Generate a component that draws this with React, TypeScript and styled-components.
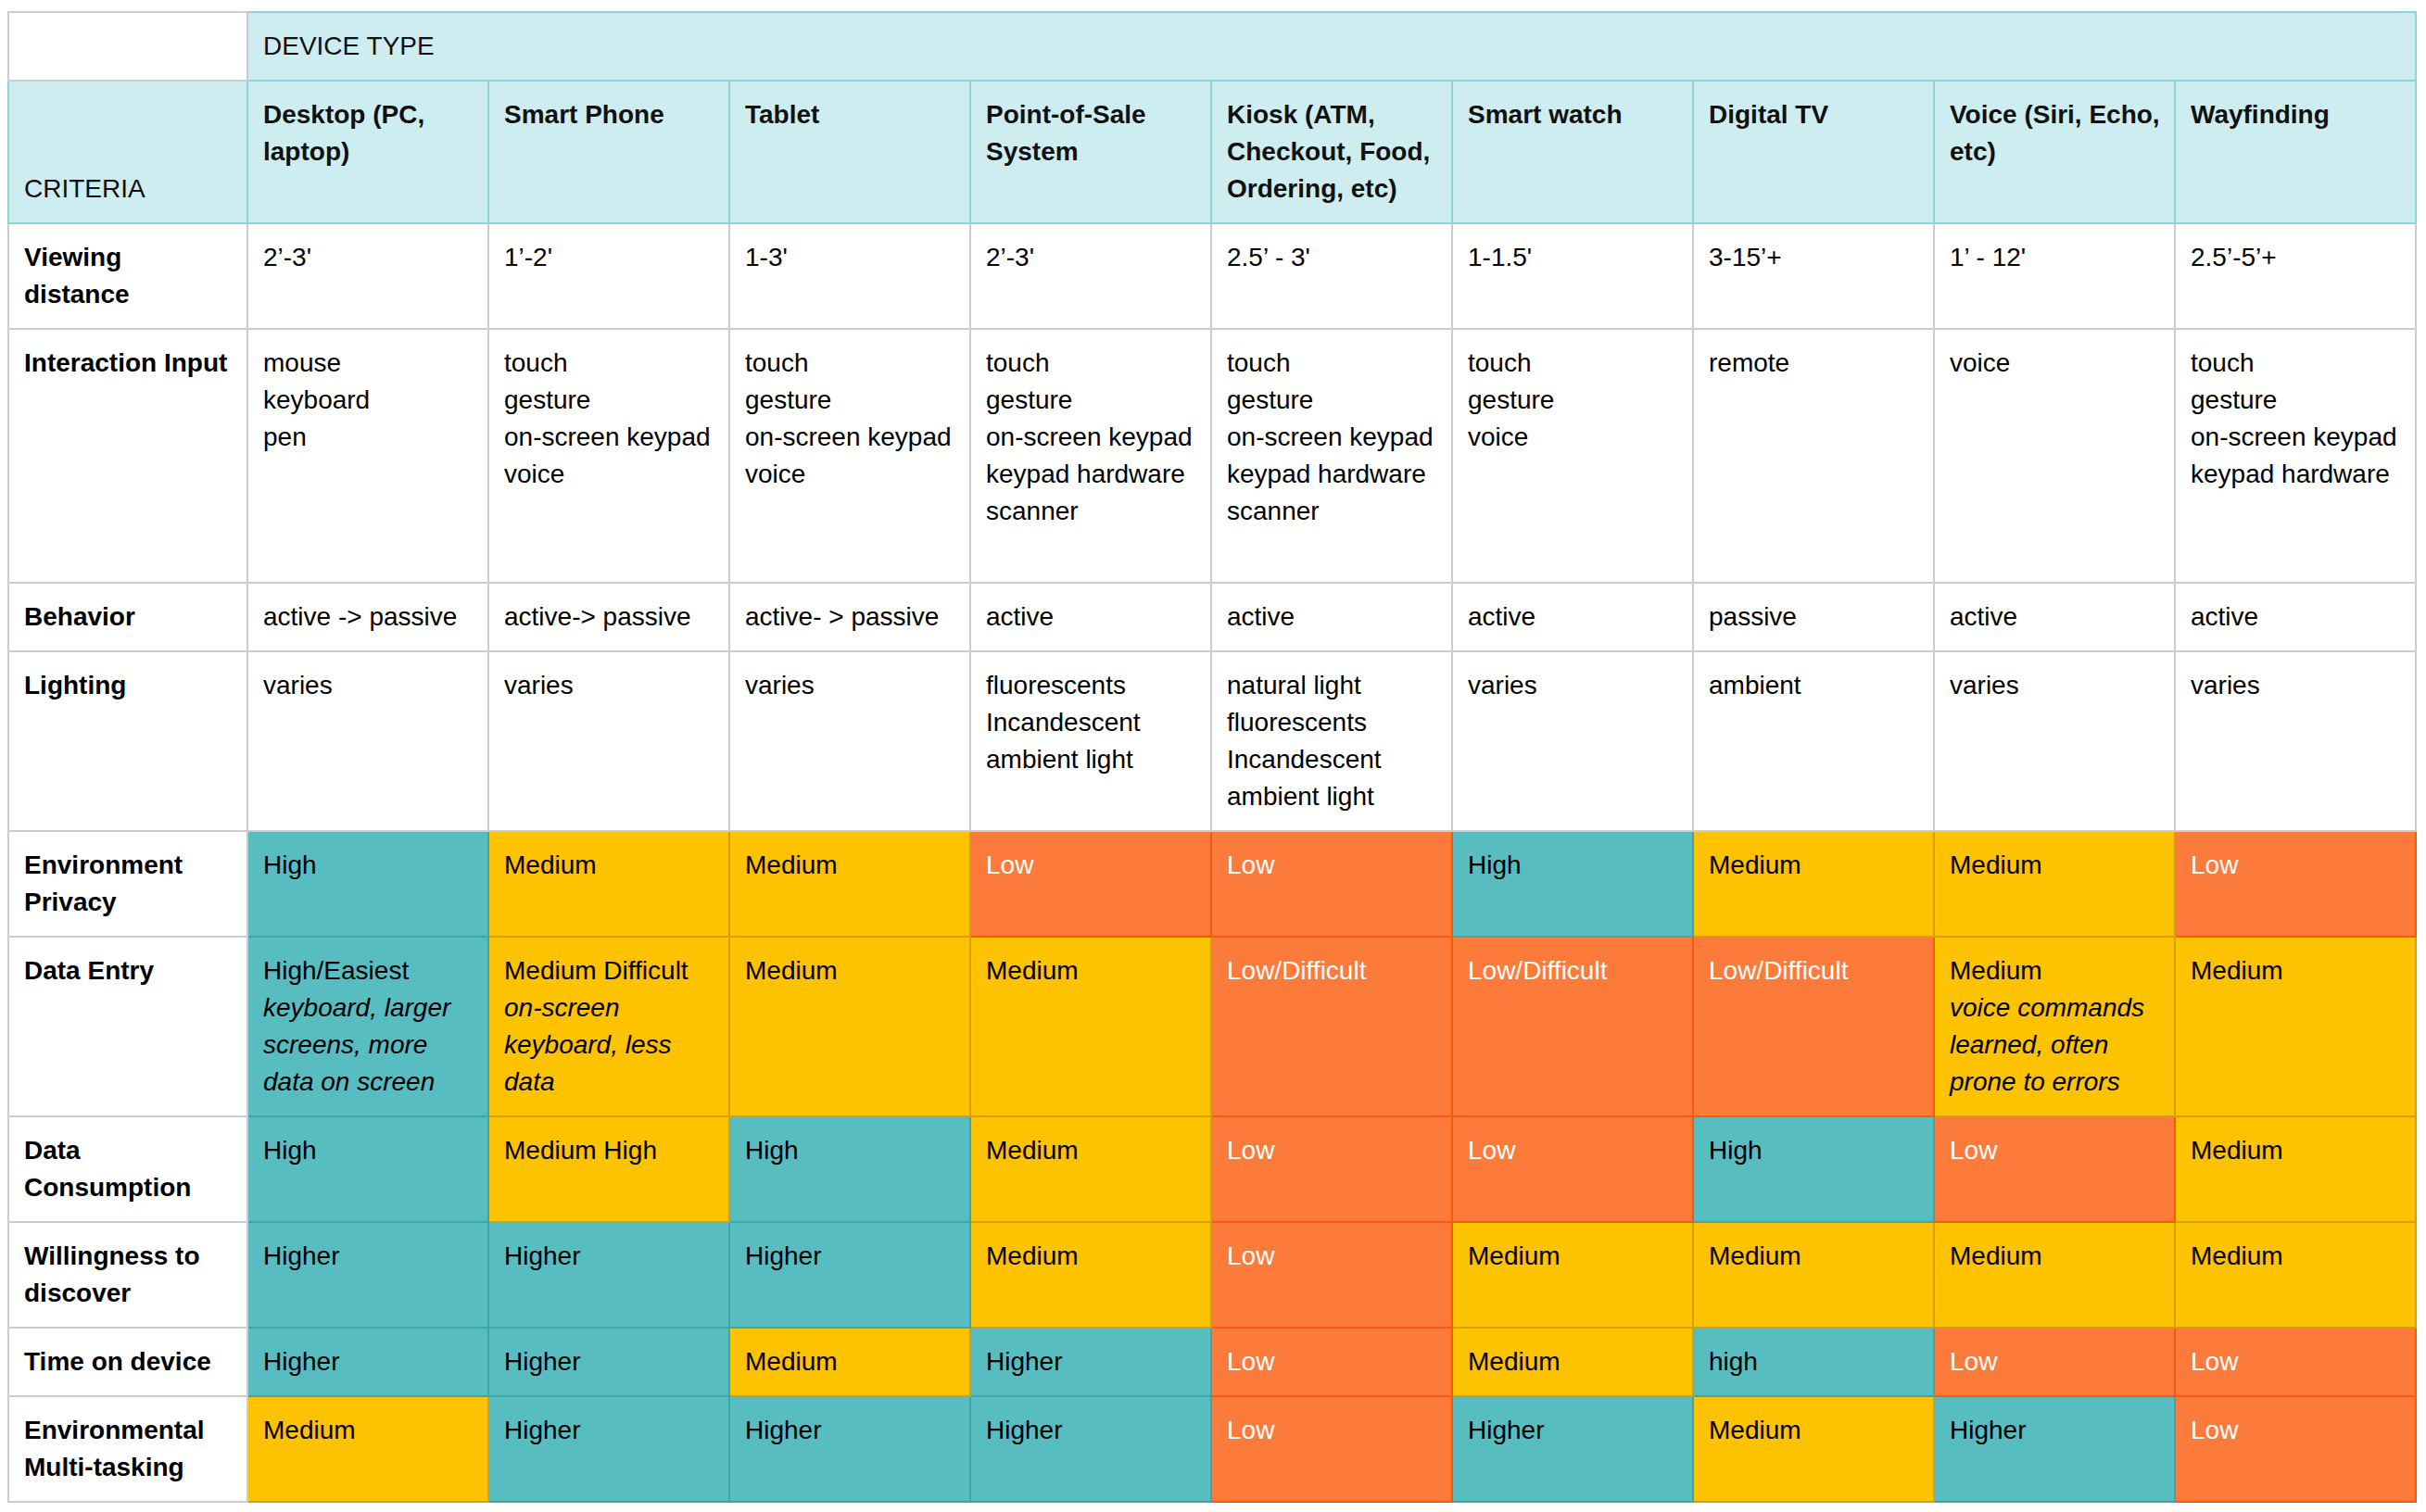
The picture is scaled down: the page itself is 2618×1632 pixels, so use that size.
import React from "react";
import styled, { createGlobalStyle, css } from "styled-components";

const GlobalStyle = createGlobalStyle`
  html, body { margin: 0; padding: 0; background: #ffffff; }
  body { font-family: "Liberation Sans", Arial, Helvetica, sans-serif; color: #000; }
`;

type Tone = "plain" | "head" | "corner" | "teal" | "yellow" | "orange";

const tones: Record<Tone, { bg: string; border: string; color: string }> = {
  plain: { bg: "#ffffff", border: "#cccccc", color: "#000000" },
  corner: { bg: "#ffffff", border: "#cccccc", color: "#000000" },
  head: { bg: "#cdedf0", border: "#8dd4da", color: "#111111" },
  teal: { bg: "#57bdc1", border: "#3ea6aa", color: "#000000" },
  yellow: { bg: "#fdc200", border: "#d3a100", color: "#000000" },
  orange: { bg: "#fd7b3a", border: "#f75a0e", color: "#ffffff" },
};

const Page = styled.div`
  padding: 12px 8px 10px 8px;
`;

const Grid = styled.table`
  border-collapse: collapse;
  table-layout: fixed;
  width: 2600px;
  font-size: 28px;
  line-height: 40px;
`;

const Col = styled.col<{ $w: number }>`
  width: ${(p) => p.$w}px;
`;

const Cell = styled.td<{ $tone: Tone; $bold?: boolean; $bottom?: boolean }>`
  ${(p) => css`
    background: ${tones[p.$tone].bg};
    color: ${tones[p.$tone].color};
    border: 2px solid ${tones[p.$tone].border};
  `}
  padding: 16px 14px 16px 16px;
  vertical-align: ${(p) => (p.$bottom ? "bottom" : "top")};
  text-align: left;
  font-weight: ${(p) => (p.$bold ? 700 : 400)};
`;

const Line = styled.div<{ $italic?: boolean }>`
  white-space: nowrap;
  font-style: ${(p) => (p.$italic ? "italic" : "normal")};
  min-height: 40px;
`;

type Entry = { lines: string[]; tone?: Tone; italicFrom?: number };
type Row = { label: string[]; cells: Entry[] };

const T = (s: string): Entry => ({ lines: [s], tone: "teal" });
const Y = (s: string): Entry => ({ lines: [s], tone: "yellow" });
const O = (s: string): Entry => ({ lines: [s], tone: "orange" });
const P = (...l: string[]): Entry => ({ lines: l, tone: "plain" });

const devices: string[][] = [
  ["Desktop (PC,", "laptop)"],
  ["Smart Phone"],
  ["Tablet"],
  ["Point-of-Sale", "System"],
  ["Kiosk (ATM,", "Checkout, Food,", "Ordering, etc)"],
  ["Smart watch"],
  ["Digital TV"],
  ["Voice (Siri, Echo,", "etc)"],
  ["Wayfinding"],
];

const rows: Row[] = [
  {
    label: ["Viewing", "distance"],
    cells: ["2’-3'", "1’-2'", "1-3'", "2’-3'", "2.5’ - 3'", "1-1.5'", "3-15’+", "1’ - 12'", "2.5’-5’+"].map((s) => P(s)),
  },
  {
    label: ["Interaction Input"],
    cells: [
      P("mouse", "keyboard", "pen"),
      P("touch", "gesture", "on-screen keypad", "voice"),
      P("touch", "gesture", "on-screen keypad", "voice"),
      P("touch", "gesture", "on-screen keypad", "keypad hardware", "scanner", ""),
      P("touch", "gesture", "on-screen keypad", "keypad hardware", "scanner"),
      P("touch", "gesture", "voice"),
      P("remote"),
      P("voice"),
      P("touch", "gesture", "on-screen keypad", "keypad hardware"),
    ],
  },
  {
    label: ["Behavior"],
    cells: ["active -> passive", "active-> passive", "active- > passive", "active", "active", "active", "passive", "active", "active"].map((s) => P(s)),
  },
  {
    label: ["Lighting"],
    cells: [
      P("varies"),
      P("varies"),
      P("varies"),
      P("fluorescents", "Incandescent", "ambient light"),
      P("natural light", "fluorescents", "Incandescent", "ambient light"),
      P("varies"),
      P("ambient"),
      P("varies"),
      P("varies"),
    ],
  },
  {
    label: ["Environment", "Privacy"],
    cells: [T("High"), Y("Medium"), Y("Medium"), O("Low"), O("Low"), T("High"), Y("Medium"), Y("Medium"), O("Low")],
  },
  {
    label: ["Data Entry"],
    cells: [
      { lines: ["High/Easiest", "keyboard, larger", "screens, more", "data on screen"], tone: "teal", italicFrom: 1 },
      { lines: ["Medium Difficult", "on-screen", "keyboard, less", "data"], tone: "yellow", italicFrom: 1 },
      Y("Medium"),
      Y("Medium"),
      O("Low/Difficult"),
      O("Low/Difficult"),
      O("Low/Difficult"),
      { lines: ["Medium", "voice commands", "learned, often", "prone to errors"], tone: "yellow", italicFrom: 1 },
      Y("Medium"),
    ],
  },
  {
    label: ["Data", "Consumption"],
    cells: [T("High"), Y("Medium High"), T("High"), Y("Medium"), O("Low"), O("Low"), T("High"), O("Low"), Y("Medium")],
  },
  {
    label: ["Willingness to", "discover"],
    cells: [T("Higher"), T("Higher"), T("Higher"), Y("Medium"), O("Low"), Y("Medium"), Y("Medium"), Y("Medium"), Y("Medium")],
  },
  {
    label: ["Time on device"],
    cells: [T("Higher"), T("Higher"), Y("Medium"), T("Higher"), O("Low"), Y("Medium"), T("high"), O("Low"), O("Low")],
  },
  {
    label: ["Environmental", "Multi-tasking"],
    cells: [Y("Medium"), T("Higher"), T("Higher"), T("Higher"), O("Low"), T("Higher"), Y("Medium"), T("Higher"), O("Low")],
  },
];

const Lines: React.FC<{ lines: string[]; italicFrom?: number }> = ({ lines, italicFrom }) => (
  <>
    {lines.map((l, i) => (
      <Line key={i} $italic={italicFrom !== undefined && i >= italicFrom}>
        {l === "" ? "\u00a0" : l}
      </Line>
    ))}
  </>
);

export default function App() {
  return (
    <Page>
      <GlobalStyle />
      <Grid>
        <colgroup>
          <Col $w={258} />
          {devices.map((_, i) => (
            <Col key={i} $w={260} />
          ))}
        </colgroup>
        <tbody>
          <tr>
            <Cell $tone="corner" />
            <Cell $tone="head" colSpan={9}>
              DEVICE TYPE
            </Cell>
          </tr>
          <tr>
            <Cell $tone="head" $bottom>
              CRITERIA
            </Cell>
            {devices.map((d, i) => (
              <Cell key={i} $tone="head" $bold>
                <Lines lines={d} />
              </Cell>
            ))}
          </tr>
          {rows.map((r, ri) => (
            <tr key={ri}>
              <Cell $tone="plain" $bold>
                <Lines lines={r.label} />
              </Cell>
              {r.cells.map((c, ci) => (
                <Cell key={ci} $tone={c.tone ?? "plain"}>
                  <Lines lines={c.lines} italicFrom={c.italicFrom} />
                </Cell>
              ))}
            </tr>
          ))}
        </tbody>
      </Grid>
    </Page>
  );
}
